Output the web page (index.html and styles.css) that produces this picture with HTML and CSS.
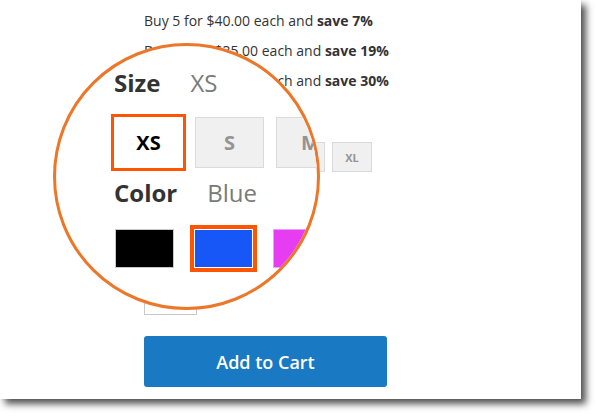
FILE: index.html
```html
<!DOCTYPE html>
<html lang="en">
<head>
<meta charset="utf-8">
<title>Product options</title>
<link rel="stylesheet" href="styles.css">
</head>
<body>
<div class="stage">
  <div class="card">
    <div class="product">
      <ul class="tiers">
        <li>Buy 5 for $40.00 each and <strong>save 7%</strong></li>
        <li>Buy 10 for $35.00 each and <strong>save 19%</strong></li>
        <li>Buy 20 for $28.00 each and <strong>save 30%</strong></li>
      </ul>
      <div class="sizes">
        <div class="size sel">XS</div>
        <div class="size">S</div>
        <div class="size">M</div>
        <div class="size">L</div>
        <div class="size">XL</div>
      </div>
      <div class="colors">
        <div class="color black"></div>
        <div class="color blue sel"></div>
        <div class="color magenta"></div>
      </div>
      <div class="qty"></div>
      <button class="cart">Add to Cart</button>
    </div>

    <div class="lens">
      <div class="lens-inner">
        <div class="l-label"><span class="l-name">Size</span><span class="l-value">XS</span></div>
        <div class="l-sizes">
          <div class="l-size sel">XS</div>
          <div class="l-size">S</div>
          <div class="l-size">M</div>
        </div>
        <div class="l-label l-color"><span class="l-name">Color</span><span class="l-value">Blue</span></div>
        <div class="l-colors">
          <div class="l-swatch black"></div>
          <div class="l-swatch blue sel"></div>
          <div class="l-swatch magenta"></div>
        </div>
      </div>
    </div>
  </div>
</div>
</body>
</html>
```

FILE: styles.css
```css
* { box-sizing: border-box; }
html, body { margin: 0; padding: 0; background: #fff; }
body { font-family: "Open Sans", "DejaVu Sans", sans-serif; color: #333; }

.stage {
  width: 597px;
  height: 416px;
  overflow: hidden;
  display: flex;
  align-items: flex-start;
}

.card {
  position: relative;
  flex: none;
  width: 581px;
  height: 399px;
  background: #fff;
  box-shadow: 5px 5px 7px rgba(0,0,0,0.68), 0 0 3px rgba(0,0,0,0.08);
}

.product {
  padding: 11px 0 0 144px;
  display: flex;
  flex-direction: column;
  align-items: flex-start;
}

.tiers {
  list-style: none;
  margin: 0;
  padding: 0;
  font-size: 14px;
  line-height: 20px;
  display: flex;
  flex-direction: column;
  gap: 10px;
}
.tiers strong { font-weight: 700; }

.sizes { display: flex; gap: 7px; margin-top: 51px; }
.size {
  width: 40px;
  height: 30px;
  border: 1px solid #dadada;
  background: #f0f0f0;
  color: #949494;
  font-size: 11px;
  font-weight: 700;
  display: flex;
  align-items: center;
  justify-content: center;
}
.size.sel { background: #fff; color: #000; outline: 2px solid #ff5501; border-color: #fff; }

.colors { display: flex; gap: 7px; margin-top: 40px; }
.color { width: 30px; height: 22px; border: 1px solid #ccc; }
.color.black { background: #000; }
.color.blue { background: #1857f7; }
.color.magenta { background: #e63cf2; }
.color.sel { outline: 2px solid #ff5501; border-color: #fff; }

.qty {
  margin-top: 49px;
  width: 53px;
  height: 32px;
  border: 1px solid #c9c9c9;
}

.cart {
  margin-top: 21px;
  width: 243px;
  height: 51px;
  border: 0;
  border-radius: 3px;
  background: #1979c3;
  color: #fff;
  font-family: "Open Sans", sans-serif;
  font-size: 18px;
  font-weight: 600;
  padding: 0;
}

/* magnifier lens overlay */
.lens {
  position: absolute;
  left: 53px;
  top: 43px;
  width: 267px;
  height: 267px;
  border-radius: 50%;
  border: 3px solid #ec7728;
  background: #fff;
  overflow: hidden;
}
.lens-inner {
  padding: 22px 0 0 58px;
  display: flex;
  flex-direction: column;
  align-items: flex-start;
}
.l-label { font-size: 24px; line-height: 30px; white-space: nowrap; }
.l-name { font-weight: 700; color: #333; margin-right: 30px; }
.l-value { color: #7a7a7a; }
.l-color { margin-top: 10px; }

.l-sizes { display: flex; gap: 12px; margin-top: 19px; }
.l-size {
  flex: none;
  width: 69px;
  height: 51px;
  border: 1px solid #dadada;
  background: #f0f0f0;
  color: #949494;
  font-size: 20px;
  font-weight: 700;
  display: flex;
  align-items: center;
  justify-content: center;
}
.l-size.sel { background: #fff; color: #000; border-color: #fff; outline: 3px solid #ff5501; }

.l-colors { display: flex; gap: 20px; margin-top: 21px; margin-left: 1px; }
.l-swatch { flex: none; width: 59px; height: 39px; border: 1px solid #c8c8c8; }
.l-swatch.black { background: #000; }
.l-swatch.blue { background: #1857f7; border: 1px solid #fff; outline: 4px solid #ff5501; }
.l-swatch.magenta { background: #e63cf2; border-color: #e9a0f0; }
```
